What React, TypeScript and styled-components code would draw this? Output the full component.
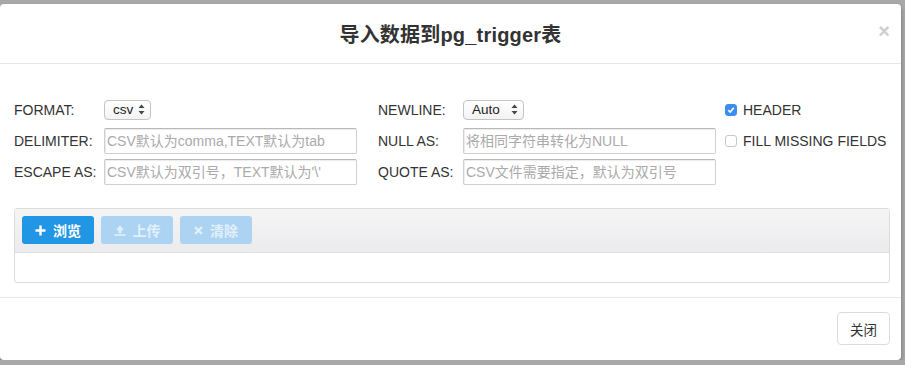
import React from "react";
import styled, { createGlobalStyle } from "styled-components";

const GlobalStyle = createGlobalStyle`
  html, body {
    margin: 0;
    padding: 0;
    background: #a8a8a8;
    font-family: "Liberation Sans", "Noto Sans CJK SC", Arial, sans-serif;
    color: #333;
  }
  * { box-sizing: border-box; }
`;

const Modal = styled.div`
  margin-top: 4px;
  width: 901px;
  height: 356px;
  background: #fff;
  border-radius: 4px;
  box-shadow: 0 3px 4px rgba(0, 0, 0, 0.35);
  display: flex;
  flex-direction: column;
`;

const Header = styled.div`
  position: relative;
  height: 60px;
  border-bottom: 1px solid #e8e8e8;
  display: flex;
  align-items: center;
  justify-content: center;
`;

const Title = styled.h4`
  margin: 0;
  font-size: 20px;
  font-weight: bold;
  color: #333;
  letter-spacing: 0.2px;
`;

const CloseX = styled.span`
  position: absolute;
  right: 11px;
  top: 17px;
  font-size: 20px;
  font-weight: bold;
  color: #cfcfcf;
  line-height: 1;
`;

const Body = styled.div`
  flex: 1;
  padding: 33px 11px 14px 14px;
  display: flex;
  flex-direction: column;
  gap: 23px;
`;

const FormGrid = styled.div`
  display: grid;
  grid-template-columns: 90px 274px 85px 262px auto;
  grid-template-rows: 26px 26px 26px;
  row-gap: 5px;
  align-items: center;
`;

const Label = styled.label`
  font-size: 14px;
  color: #333;
  white-space: nowrap;
`;

const Select = styled.div<{ $w: number }>`
  width: ${(p) => p.$w}px;
  height: 20px;
  border: 1px solid #c4c4c4;
  border-radius: 4px;
  background: linear-gradient(#fff, #f3f3f3);
  display: flex;
  align-items: center;
  justify-content: space-between;
  padding: 0 5px 0 8px;
  font-size: 13.5px;
  color: #222;
`;

const Input = styled.input`
  width: 253px;
  height: 26px;
  border: 1px solid #cfcfcf;
  border-top-color: #b8b8b8;
  border-radius: 2px;
  padding: 0 2px;
  font-family: inherit;
  font-size: 14px;
  outline: none;
  box-shadow: inset 1px 1px 1px rgba(0, 0, 0, 0.08);
  &::placeholder {
    color: #aaa;
  }
`;

const CheckRow = styled.label`
  display: flex;
  align-items: center;
  gap: 6px;
  font-size: 14px;
  color: #333;
  white-space: nowrap;
`;

const Box = styled.span<{ $on?: boolean }>`
  width: 12px;
  height: 12px;
  border-radius: 3px;
  border: 1px solid ${(p) => (p.$on ? "#3b8df0" : "#c8c8c8")};
  background: ${(p) => (p.$on ? "#3b8df0" : "#fff")};
  display: inline-flex;
  align-items: center;
  justify-content: center;
`;

const Panel = styled.div`
  border: 1px solid #dcdcdc;
  border-radius: 3px;
  width: 876px;
`;

const Toolbar = styled.div`
  height: 44px;
  background: linear-gradient(#f5f5f6, #ebebed);
  border-bottom: 1px solid #e2e2e2;
  display: flex;
  align-items: center;
  gap: 7px;
  padding: 0 7px;
`;

const PanelBody = styled.div`
  height: 29px;
`;

const ToolButton = styled.button<{ $disabled?: boolean }>`
  height: 28px;
  width: 72px;
  border: none;
  border-radius: 3px;
  background: ${(p) => (p.$disabled ? "#acd3f1" : "#2196e4")};
  color: ${(p) => (p.$disabled ? "#e2f0fb" : "#fff")};
  font-family: inherit;
  font-size: 14px;
  font-weight: bold;
  display: flex;
  align-items: center;
  justify-content: center;
  gap: 7px;
  padding: 0;
`;

const Footer = styled.div`
  height: 64px;
  border-top: 1px solid #e8e8e8;
  display: flex;
  align-items: center;
  justify-content: flex-end;
  padding-right: 11px;
`;

const FooterButton = styled.button`
  width: 53px;
  height: 33px;
  border: 1px solid #dcdcdc;
  border-radius: 4px;
  background: #fff;
  font-family: inherit;
  font-size: 13.5px;
  color: #333;
`;

const Arrows = () => (
  <svg width="7" height="11" viewBox="0 0 7 11">
    <path d="M3.5 0.5 L6.5 4 H0.5 Z" fill="#444" />
    <path d="M3.5 10.5 L6.5 7 H0.5 Z" fill="#444" />
  </svg>
);

const App = () => {
  return (
    <>
      <GlobalStyle />
      <Modal>
        <Header>
          <Title>导入数据到pg_trigger表</Title>
          <CloseX>×</CloseX>
        </Header>
        <Body>
          <FormGrid>
            <Label>FORMAT:</Label>
            <div>
              <Select $w={47}>
                csv <Arrows />
              </Select>
            </div>
            <Label>NEWLINE:</Label>
            <div>
              <Select $w={61}>
                Auto <Arrows />
              </Select>
            </div>
            <CheckRow>
              <Box $on>
                <svg width="8" height="8" viewBox="0 0 8 8">
                  <path d="M1.2 4.2 L3.2 6 L6.8 1.8" stroke="#fff" strokeWidth="1.6" fill="none" />
                </svg>
              </Box>
              HEADER
            </CheckRow>

            <Label>DELIMITER:</Label>
            <Input placeholder="CSV默认为comma,TEXT默认为tab" />
            <Label>NULL AS:</Label>
            <Input placeholder="将相同字符串转化为NULL" />
            <CheckRow>
              <Box />
              FILL MISSING FIELDS
            </CheckRow>

            <Label>ESCAPE AS:</Label>
            <Input placeholder="CSV默认为双引号，TEXT默认为'\'" />
            <Label>QUOTE AS:</Label>
            <Input placeholder="CSV文件需要指定，默认为双引号" />
            <span />
          </FormGrid>

          <Panel>
            <Toolbar>
              <ToolButton>
                <svg width="11" height="11" viewBox="0 0 11 11">
                  <path d="M5.5 0.5 V10.5 M0.5 5.5 H10.5" stroke="#fff" strokeWidth="2.4" />
                </svg>
                浏览
              </ToolButton>
              <ToolButton $disabled>
                <svg width="12" height="11" viewBox="0 0 12 11">
                  <path d="M6 0.5 L10 5 H7.4 V8 H4.6 V5 H2 Z" fill="#e2f0fb" />
                  <path d="M0.5 9.2 H11.5 V10.8 H0.5 Z" fill="#e2f0fb" />
                </svg>
                上传
              </ToolButton>
              <ToolButton $disabled>
                <svg width="9" height="9" viewBox="0 0 9 9">
                  <path d="M1 1 L8 8 M8 1 L1 8" stroke="#e2f0fb" strokeWidth="2.2" />
                </svg>
                清除
              </ToolButton>
            </Toolbar>
            <PanelBody />
          </Panel>
        </Body>
        <Footer>
          <FooterButton>关闭</FooterButton>
        </Footer>
      </Modal>
    </>
  );
};

export default App;
